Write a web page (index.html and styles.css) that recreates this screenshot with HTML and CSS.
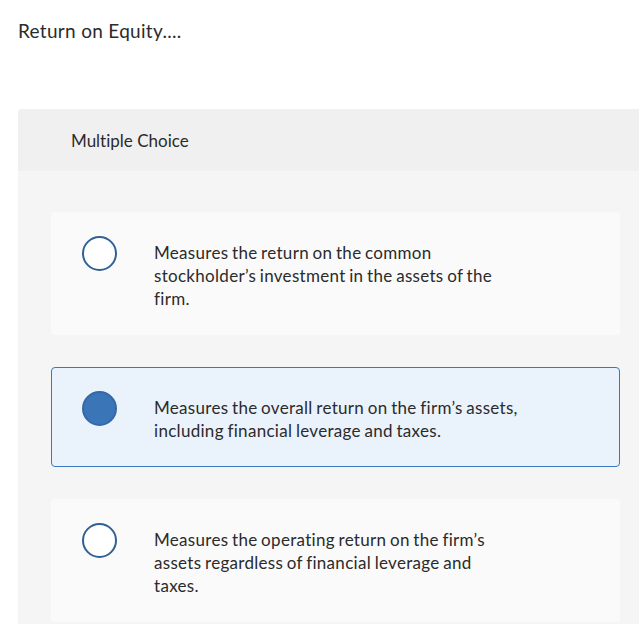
FILE: index.html
```html
<!DOCTYPE html>
<html>
<head>
<meta charset="utf-8">
<link rel="stylesheet" href="styles.css">
</head>
<body>
<div class="page">
  <p class="question">Return on Equity....</p>
  <div class="card">
    <div class="card-header">Multiple Choice</div>
    <div class="card-body">
      <div class="option">
        <span class="radio"></span>
        <span class="option-text">Measures the return on the common stockholder’s investment in the assets of the firm.</span>
      </div>
      <div class="option selected">
        <span class="radio"></span>
        <span class="option-text">Measures the overall return on the firm’s assets, including financial leverage and taxes.</span>
      </div>
      <div class="option">
        <span class="radio"></span>
        <span class="option-text">Measures the operating return on the firm’s assets regardless of financial leverage and taxes.</span>
      </div>
    </div>
  </div>
</div>
</body>
</html>
```

FILE: styles.css
```css
html, body {
  margin: 0;
  padding: 0;
  background: #ffffff;
  overflow: hidden;
}
body {
  font-family: "Lato", "Liberation Sans", sans-serif;
  font-variant-ligatures: none;
  color: #2b2b2b;
}
.page {
  padding: 0 0 0 18px;
  width: 635px;
}
.question {
  margin: 0;
  padding-top: 19px;
  font-size: 19px;
  letter-spacing: 0.3px;
  line-height: 24px;
  height: 90px;
}
.card {
  width: 635px;
  background: #f5f5f5;
  border-radius: 4px 4px 0 0;
}
.card-header {
  background: #f0f0f0;
  height: 62px;
  display: flex;
  align-items: center;
  padding-left: 53px;
  font-size: 17px;
  border-radius: 4px 4px 0 0;
}
.card-body {
  padding: 41px 33px 40px 33px;
  display: flex;
  flex-direction: column;
  gap: 32px;
}
.option {
  background: #fafafa;
  border-radius: 4px;
  display: flex;
  align-items: flex-start;
  padding: 28px 0 24px 0;
  border: 1px solid transparent;
}
.option.selected {
  background: #eaf2fb;
  border-color: #3a78bd;
}
.radio {
  flex: none;
  box-sizing: border-box;
  width: 35px;
  height: 35px;
  border-radius: 50%;
  border: 2px solid #2f6196;
  background: #ffffff;
  margin: -5px 0 0 30px;
}
.selected .radio {
  background: #3a76b7;
  border-color: #3468a6;
}
.option-text {
  margin-left: 37px;
  max-width: 364px;
  font-size: 17px;
  letter-spacing: 0.3px;
  word-spacing: -1px;
  line-height: 23px;
}
```
